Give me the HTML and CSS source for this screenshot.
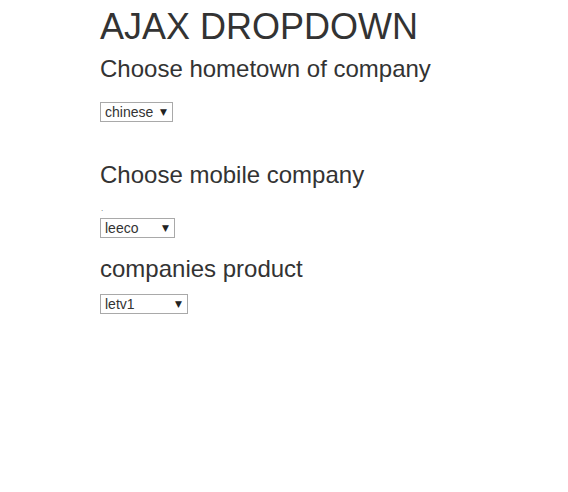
FILE: index.html
```html
<!DOCTYPE html>
<html lang="en">

<head>
    <meta charset="UTF-8">
    <meta name="viewport" content="width=device-width, initial-scale=1.0">
    <title>Ajax Dropdown</title>

    <link rel="stylesheet" href="styles.css">

</head>

<body>

    <div class="container">

        <h1 class="titulo">AJAX DROPDOWN</h1>

        <h3 class="sub primeiro">Choose hometown of company</h3>
        <div class="pick pick-pais">
            <select id="pais">
                <option>chinese</option>
                <option>indian</option>
            </select>
        </div>

        <h3 class="sub segundo">Choose mobile company</h3>
        <div class="estado">.</div>
        <div class="pick pick-empresa">
            <select id="empresa">
                <option>leeco</option>
                <option>xiaomi</option>
            </select>
        </div>

        <h3 class="sub terceiro">companies product</h3>
        <div class="pick pick-produto">
            <select id="produto">
                <option>letv1</option>
                <option>letv1 pro</option>
            </select>
        </div>

    </div>

</body>

</html>
```

FILE: styles.css
```css
body {
    margin: 0;
    font-family: 'Liberation Sans', Arial, sans-serif;
    color: #333333;
    background-color: #ffffff;
}

.container {
    padding-left: 100px;
}

.titulo {
    font-size: 36px;
    font-weight: normal;
    line-height: 1.1;
    margin: 7px 0 0 0;
}

.sub {
    font-size: 24px;
    font-weight: normal;
    line-height: 1.1;
    margin: 0;
}

.primeiro {
    margin-top: 9px;
    margin-bottom: 20px;
}

.segundo {
    margin-top: 40px;
    margin-bottom: 17px;
}

.terceiro {
    margin-top: 18px;
    margin-bottom: 11px;
}

.estado {
    font-size: 8px;
    line-height: 8px;
    color: #555;
    margin-left: 1px;
    margin-bottom: 5px;
}

.pick {
    position: relative;
    height: 20px;
}

.pick select {
    display: block;
    width: 100%;
    height: 20px;
    margin: 0;
    padding: 0 0 0 4px;
    border: 1px solid #a9a9a9;
    background-color: #ffffff;
    color: #333333;
    font-family: 'Liberation Sans', Arial, sans-serif;
    font-size: 14px;
    -webkit-appearance: none;
    appearance: none;
    border-radius: 0;
}

.pick::after {
    content: "\25BC";
    position: absolute;
    right: 6px;
    top: 5px;
    font-family: 'DejaVu Sans', sans-serif;
    font-size: 9px;
    line-height: 10px;
    color: #222;
    pointer-events: none;
}

.pick-pais {
    width: 73px;
}

.pick-empresa {
    width: 75px;
}

.pick-produto {
    width: 88px;
}
```
